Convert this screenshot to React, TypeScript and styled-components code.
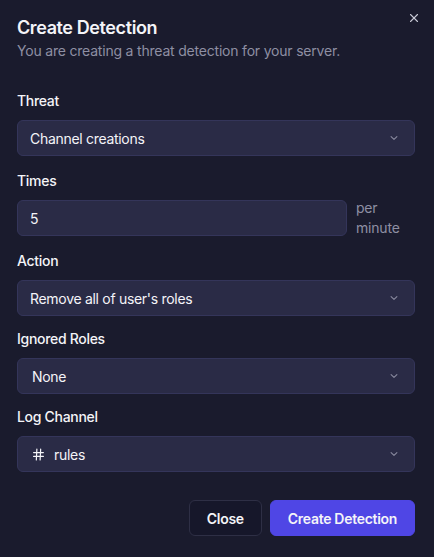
import React, { useState } from "react";
import styled, { createGlobalStyle } from "styled-components";

const GlobalStyle = createGlobalStyle`
    html, body {
        margin: 0;
        padding: 0;
        background: #1a1b2d;
    }
    * {
        box-sizing: border-box;
    }
`;

const Dialog = styled.div`
    position: relative;
    width: 434px;
    height: 557px;
    padding: 16px 19px 21px 17px;
    background: #1a1b2d;
    font-family: Inter, "Noto Sans", sans-serif;
    color: #f4f4f8;
    display: flex;
    flex-direction: column;
`;

const CloseIcon = styled.button`
    position: absolute;
    top: 10px;
    right: 12px;
    width: 16px;
    height: 16px;
    padding: 0;
    border: none;
    background: none;
    color: #c9cad6;
    display: flex;
    align-items: center;
    justify-content: center;
    cursor: pointer;
`;

const Title = styled.h2`
    margin: 0;
    font-size: 18px;
    line-height: 24px;
    font-weight: 600;
    letter-spacing: -0.4px;
`;

const Subtitle = styled.p`
    margin: 1px 0 0;
    font-size: 14px;
    line-height: 20px;
    color: #8e8fa3;
    letter-spacing: -0.2px;
`;

const Form = styled.div`
    display: flex;
    flex-direction: column;
    margin-top: 30px;
`;

const Field = styled.div<{ $space?: number }>`
    display: flex;
    flex-direction: column;
    margin-bottom: ${(p) => p.$space ?? 13}px;
`;

const Label = styled.label`
    font-size: 14px;
    line-height: 20px;
    font-weight: 500;
    letter-spacing: -0.3px;
    margin-bottom: 9px;
`;

const Box = styled.div<{ $grow?: boolean; $inset?: boolean }>`
    height: 36px;
    display: flex;
    align-items: center;
    padding: 0 13px 0 ${(p) => (p.$inset ? 14 : 12)}px;
    background: #2a2b46;
    border: 1px solid #34355a;
    border-radius: 6px;
    font-size: 14px;
    letter-spacing: -0.3px;
    color: #f4f4f8;
    flex: ${(p) => (p.$grow ? 1 : "none")};
`;

const SelectValue = styled.span`
    flex: 1;
    display: flex;
    align-items: center;
    gap: 9px;
`;

const Row = styled.div`
    display: flex;
    align-items: center;
    gap: 9px;
`;

const Suffix = styled.span`
    font-size: 14px;
    line-height: 20px;
    margin: -2px 0;
    color: #8e8fa3;
    width: 59px;
    letter-spacing: -0.2px;
`;

const Actions = styled.div`
    margin-top: auto;
    display: flex;
    justify-content: flex-end;
    gap: 8px;
`;

const Button = styled.button<{ $primary?: boolean }>`
    height: 36px;
    padding: 0 17px;
    border-radius: 6px;
    font-family: Inter, "Noto Sans", sans-serif;
    font-size: 14px;
    font-weight: 600;
    letter-spacing: -0.3px;
    color: #f4f4f8;
    cursor: pointer;
    background: ${(p) => (p.$primary ? "#4f46e5" : "#16172a")};
    border: 1px solid ${(p) => (p.$primary ? "#4f46e5" : "#2e2f45")};
`;

const Chevron = () => (
    <svg width="14" height="14" viewBox="0 0 24 24" fill="none" stroke="#8a8ba0" strokeWidth="1.8" strokeLinecap="round" strokeLinejoin="round">
        <path d="m7 9.5 5 5 5-5" />
    </svg>
);

const Hash = () => (
    <svg width="13" height="13" viewBox="0 0 24 24" fill="none" stroke="#f4f4f8" strokeWidth="2.2" strokeLinecap="round">
        <line x1="3" y1="8.5" x2="21" y2="8.5" />
        <line x1="3" y1="15.5" x2="21" y2="15.5" />
        <line x1="9" y1="2" x2="8" y2="22" />
        <line x1="16" y1="2" x2="15" y2="22" />
    </svg>
);

const Select = ({ children, inset }: { children: React.ReactNode; inset?: boolean }) => (
    <Box $inset={inset}>
        <SelectValue>{children}</SelectValue>
        <Chevron />
    </Box>
);

const App = () => {
    const [times] = useState("5");

    return (
        <>
            <GlobalStyle />
            <Dialog>
                <CloseIcon aria-label="Close">
                    <svg width="12" height="12" viewBox="0 0 24 24" fill="none" stroke="currentColor" strokeWidth="2.2" strokeLinecap="round">
                        <path d="M19 5 5 19" />
                        <path d="m5 5 14 14" />
                    </svg>
                </CloseIcon>
                <Title>Create Detection</Title>
                <Subtitle>You are creating a threat detection for your server.</Subtitle>
                <Form>
                    <Field $space={15}>
                        <Label>Threat</Label>
                        <Select>Channel creations</Select>
                    </Field>
                    <Field $space={15}>
                        <Label>Times</Label>
                        <Row>
                            <Box $grow>{times}</Box>
                            <Suffix>per minute</Suffix>
                        </Row>
                    </Field>
                    <Field>
                        <Label>Action</Label>
                        <Select>Remove all of user's roles</Select>
                    </Field>
                    <Field>
                        <Label>Ignored Roles</Label>
                        <Select inset>None</Select>
                    </Field>
                    <Field>
                        <Label>Log Channel</Label>
                        <Select inset>
                            <Hash />
                            rules
                        </Select>
                    </Field>
                </Form>
                <Actions>
                    <Button>Close</Button>
                    <Button $primary>Create Detection</Button>
                </Actions>
            </Dialog>
        </>
    );
};

export default App;
